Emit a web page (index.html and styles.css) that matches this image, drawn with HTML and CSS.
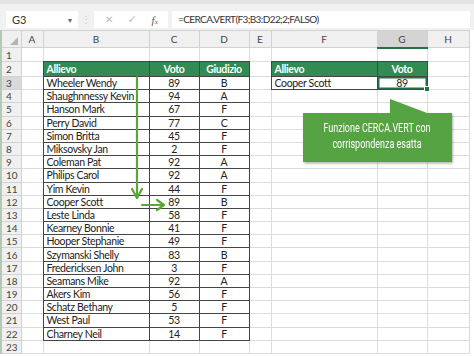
FILE: index.html
```html
<!DOCTYPE html>
<html lang="it">
<head>
<meta charset="utf-8">
<title>CERCA.VERT</title>
<link rel="stylesheet" href="styles.css">
</head>
<body>
<div class="page">
  <div class="toolbar">
    <div class="namebox"><span>G3</span><span class="caret">▾</span></div>
    <div class="sep">⋮</div>
    <div class="icons"><span class="ic-x">✕</span><span class="ic-ok">✓</span><span class="ic-fx"><i>f</i><small>x</small></span></div>
    <div class="formula">=CERCA.VERT(F3;B3:D22;2;FALSO)</div>
  </div>
  <table class="sheet">
    <colgroup>
      <col class="c-rh"><col class="c-a"><col class="c-b"><col class="c-c"><col class="c-d"><col class="c-e"><col class="c-f"><col class="c-g"><col class="c-h">
    </colgroup>
    <tr class="colhdr">
      <th class="corner"><svg width="8" height="8" viewBox="0 0 8 8"><polygon points="8,0 8,8 0,8" fill="#b5b5b5"/></svg></th>
      <th>A</th><th>B</th><th>C</th><th>D</th><th>E</th><th>F</th><th class="sel">G</th><th>H</th>
    </tr>
    <tr class="r1"><th class="rh">1</th><td></td><td></td><td></td><td></td><td></td><td></td><td></td><td></td></tr>
    <tr class="r2"><th class="rh">2</th><td></td><td class="th">Allievo</td><td class="th ctr">Voto</td><td class="th ctr">Giudizio</td><td></td><td class="th">Allievo</td><td class="th ctr">Voto</td><td></td></tr>
    <tr><th class="rh selrow">3</th><td></td><td class="t">Wheeler Wendy</td><td class="t ctr">89</td><td class="t ctr">B</td><td></td><td class="t">Cooper Scott</td><td class="t ctr active">89<span class="handle"></span></td><td></td></tr>
    <tr><th class="rh">4</th><td></td><td class="t">Shaughnnessy Kevin</td><td class="t ctr">94</td><td class="t ctr">A</td><td></td><td></td><td></td><td></td></tr>
    <tr><th class="rh">5</th><td></td><td class="t">Hanson Mark</td><td class="t ctr">67</td><td class="t ctr">F</td><td></td><td></td><td></td><td></td></tr>
    <tr><th class="rh">6</th><td></td><td class="t">Perry David</td><td class="t ctr">77</td><td class="t ctr">C</td><td></td><td></td><td></td><td></td></tr>
    <tr><th class="rh">7</th><td></td><td class="t">Simon Britta</td><td class="t ctr">45</td><td class="t ctr">F</td><td></td><td></td><td></td><td></td></tr>
    <tr><th class="rh">8</th><td></td><td class="t">Miksovsky Jan</td><td class="t ctr">2</td><td class="t ctr">F</td><td></td><td></td><td></td><td></td></tr>
    <tr><th class="rh">9</th><td></td><td class="t">Coleman Pat</td><td class="t ctr">92</td><td class="t ctr">A</td><td></td><td></td><td></td><td></td></tr>
    <tr><th class="rh">10</th><td></td><td class="t">Philips Carol</td><td class="t ctr">92</td><td class="t ctr">A</td><td></td><td></td><td></td><td></td></tr>
    <tr><th class="rh">11</th><td></td><td class="t">Yim Kevin</td><td class="t ctr">44</td><td class="t ctr">F</td><td></td><td></td><td></td><td></td></tr>
    <tr><th class="rh">12</th><td></td><td class="t">Cooper Scott</td><td class="t ctr">89</td><td class="t ctr">B</td><td></td><td></td><td></td><td></td></tr>
    <tr><th class="rh">13</th><td></td><td class="t">Leste Linda</td><td class="t ctr">58</td><td class="t ctr">F</td><td></td><td></td><td></td><td></td></tr>
    <tr><th class="rh">14</th><td></td><td class="t">Kearney Bonnie</td><td class="t ctr">41</td><td class="t ctr">F</td><td></td><td></td><td></td><td></td></tr>
    <tr><th class="rh">15</th><td></td><td class="t">Hooper Stephanie</td><td class="t ctr">49</td><td class="t ctr">F</td><td></td><td></td><td></td><td></td></tr>
    <tr><th class="rh">16</th><td></td><td class="t">Szymanski Shelly</td><td class="t ctr">83</td><td class="t ctr">B</td><td></td><td></td><td></td><td></td></tr>
    <tr><th class="rh">17</th><td></td><td class="t">Fredericksen John</td><td class="t ctr">3</td><td class="t ctr">F</td><td></td><td></td><td></td><td></td></tr>
    <tr><th class="rh">18</th><td></td><td class="t">Seamans Mike</td><td class="t ctr">92</td><td class="t ctr">A</td><td></td><td></td><td></td><td></td></tr>
    <tr><th class="rh">19</th><td></td><td class="t">Akers Kim</td><td class="t ctr">56</td><td class="t ctr">F</td><td></td><td></td><td></td><td></td></tr>
    <tr><th class="rh">20</th><td></td><td class="t">Schatz Bethany</td><td class="t ctr">5</td><td class="t ctr">F</td><td></td><td></td><td></td><td></td></tr>
    <tr><th class="rh">21</th><td></td><td class="t">West Paul</td><td class="t ctr">53</td><td class="t ctr">F</td><td></td><td></td><td></td><td></td></tr>
    <tr><th class="rh">22</th><td></td><td class="t">Charney Neil</td><td class="t ctr">14</td><td class="t ctr">F</td><td></td><td></td><td></td><td></td></tr>
    <tr><th class="rh">23</th><td></td><td></td><td></td><td></td><td></td><td></td><td></td><td></td></tr>
  </table>

  <svg class="overlay" width="474" height="357" viewBox="0 0 474 357">
    <defs>
      <filter id="sh" x="-10%" y="-10%" width="130%" height="140%">
        <feDropShadow dx="1" dy="1.5" stdDeviation="1.2" flood-color="#000" flood-opacity="0.3"/>
      </filter>
    </defs>
    <g stroke="#5aa63a" stroke-width="2.2" fill="none" stroke-linecap="round" stroke-linejoin="round">
      <line x1="137" y1="77" x2="137" y2="198"/>
      <polyline points="132,189 137,198 142,189"/>
      <line x1="142" y1="205" x2="164" y2="205"/>
      <polyline points="157,200 164,205 157,210"/>
    </g>
    <path d="M303 113 H390 V99 L427 113 H452 V162 H303 Z" fill="#55a342" filter="url(#sh)"/>
  </svg>
  <div class="callout">Funzione CERCA.VERT con<br>corrispondenza esatta</div>
</div>
</body>
</html>
```
FILE: styles.css
```css
html, body {
  margin: 0;
  padding: 0;
  background: #ffffff;
}

.page {
  position: relative;
  width: 474px;
  height: 357px;
  overflow: hidden;
  font-family: Lato, "Liberation Sans", sans-serif;
  color: #222;
}

/* formula bar */
.toolbar {
  box-sizing: border-box;
  height: 30px;
  border-top: 4px solid #e3e3e3;
  background: #f1f1f1;
  display: flex;
  align-items: flex-start;
  padding: 7px 4px 0 6px;
  gap: 0;
}

.namebox {
  box-sizing: border-box;
  width: 72px;
  height: 17px;
  background: #fff;
  display: flex;
  align-items: center;
  justify-content: space-between;
  padding: 0 6px 0 6px;
  font-size: 11px;
  color: #333;
}

.caret {
  font-size: 8px;
  color: #666;
}

.sep {
  width: 16px;
  height: 17px;
  line-height: 17px;
  text-align: center;
  color: #c4c4c4;
  font-size: 10px;
}

.icons {
  box-sizing: border-box;
  width: 74px;
  height: 17px;
  background: #fff;
  display: flex;
  align-items: center;
  padding-left: 11px;
  gap: 14px;
  font-family: "DejaVu Sans", sans-serif;
  font-size: 10px;
  color: #b9b9b9;
}

.ic-ok {
  font-size: 11px;
}

.ic-fx {
  margin-left: 1px;
  color: #555;
  font-family: "Liberation Serif", serif;
  font-size: 11px;
}

.ic-fx small {
  font-size: 7px;
  font-style: italic;
}

.formula {
  flex: 1;
  height: 17px;
  margin-left: 4px;
  background: #fff;
  padding-left: 6px;
  font-size: 10px;
  letter-spacing: -0.6px;
  line-height: 17px;
  color: #333;
}

/* sheet */
.sheet {
  border-collapse: collapse;
  table-layout: fixed;
  width: 468px;
  font-size: 10.5px;
  letter-spacing: -0.35px;
}

.c-rh { width: 20px; }
.c-a { width: 22px; }
.c-b { width: 106px; }
.c-c { width: 50px; }
.c-d { width: 50px; }
.c-e { width: 22px; }
.c-f { width: 106px; }
.c-g { width: 50px; }
.c-h { width: 42px; }

.sheet tr { height: 13.2px; }
.sheet tr.colhdr { height: 17px; }
.sheet tr.r1 { height: 14px; }
.sheet tr.r2 { height: 15px; }

.sheet th,
.sheet td {
  padding: 0;
  line-height: 12px;
  border: 1px solid #dcdcdc;
  white-space: nowrap;
  overflow: hidden;
}

.sheet th {
  background: #f0f0f0;
  font-weight: normal;
  color: #444;
  font-size: 10px;
  letter-spacing: 0;
  border-color: #d2d2d2;
}

.sheet th.rh {
  text-align: left;
  padding-left: 4px;
  border-left: 2px solid #b3c9b3;
}

.sheet th.corner {
  text-align: right;
  vertical-align: bottom;
  padding: 0 3px 2px 0;
  border-left: 2px solid #b3c9b3;
}

.corner svg {
  display: block;
  margin-left: auto;
}

.sheet th.sel {
  background: #d4d4d4;
  border-bottom: 2px double #217346;
}

.sheet th.selrow {
  background: #d9d9d9;
}

.sheet td.t,
.sheet td.th {
  border: 1px double #454545;
  padding-left: 3px;
}

.sheet td.th {
  background: #318b52;
  color: #fff;
  font-weight: bold;
}

.sheet td.ctr {
  text-align: center;
  padding-left: 0;
}

.sheet td.active {
  position: relative;
  overflow: visible;
  box-shadow: inset 0 0 0 1.5px #217346;
}

.handle {
  position: absolute;
  right: -3px;
  bottom: -3px;
  width: 4px;
  height: 4px;
  background: #217346;
  border: 1px solid #fff;
}

/* overlays */
.overlay {
  position: absolute;
  left: 0;
  top: 0;
  pointer-events: none;
}

.callout {
  position: absolute;
  left: 252px;
  top: 120px;
  width: 250px;
  text-align: center;
  color: #fff;
  font-family: Roboto, "Liberation Sans", sans-serif;
  font-size: 13px;
  line-height: 16px;
  transform: scaleX(0.69);
  transform-origin: center top;
}
```
